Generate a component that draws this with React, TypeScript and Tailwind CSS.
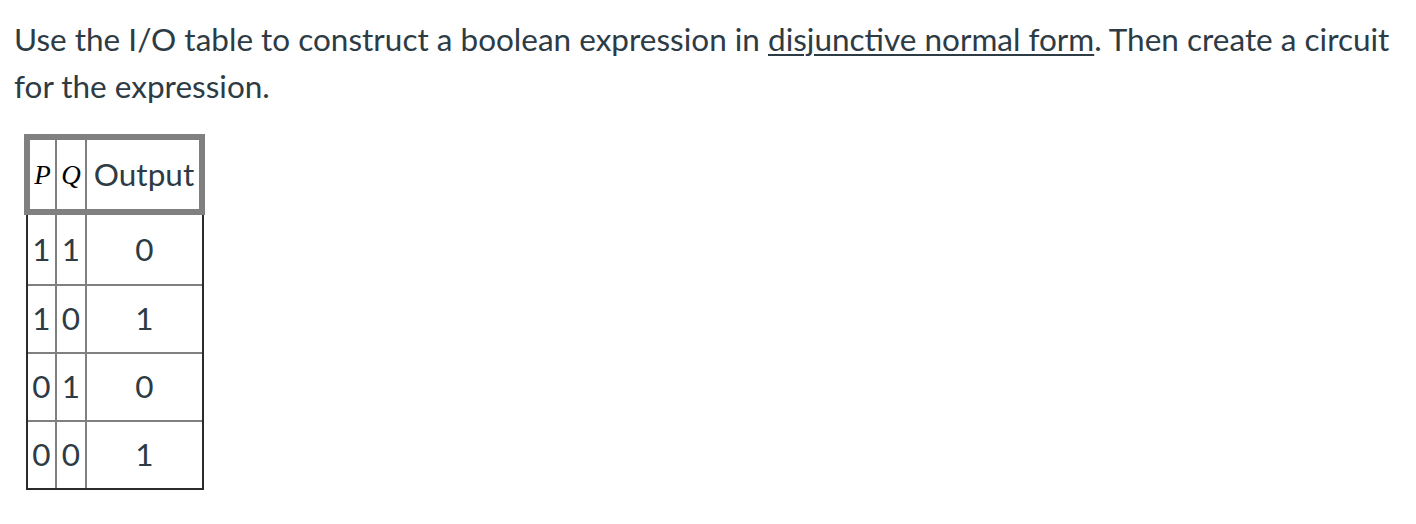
import React from "react";

const lato = { fontFamily: "Lato, 'Open Sans', sans-serif" };
const serif = { fontFamily: "'Liberation Serif', 'DejaVu Serif', serif" };

function Row({ a, b, out, h, last }: { a: string; b: string; out: string; h: string; last?: boolean }) {
  return (
    <div className={`flex ${h} ${last ? "" : "border-b-2 border-[#808080]"}`}>
      <div className="w-[29px] flex items-center justify-center border-r-2 border-[#808080]">{a}</div>
      <div className="w-[30px] flex items-center justify-center border-r-2 border-[#808080]">{b}</div>
      <div className="flex-1 flex items-center justify-center">{out}</div>
    </div>
  );
}

export default function App() {
  return (
    <div className="bg-white w-[1416px] h-[524px] text-[#2d3b45] text-[31.5px]" style={lato}>
      <p className="pl-[14px] pt-[16px] leading-[47px]">
        Use the I/O table to construct a boolean expression in{" "}
        <span className="underline decoration-2 underline-offset-[3px]">disjunctive normal form</span>. Then create a circuit
        <br />
        for the expression.
      </p>
      <div className="ml-[24px] mt-[24px] w-[181px]">
        <div className="flex h-[81px] border-[6px] border-[#808080]">
          <div className="w-[27px] flex items-center justify-center border-r-2 border-[#808080] text-[27px] leading-none italic text-black pt-[2px]" style={serif}>P</div>
          <div className="w-[30px] flex items-center justify-center border-r-2 border-[#808080] text-[27px] leading-none italic text-black pt-[2px]" style={serif}>Q</div>
          <div className="flex-1 flex items-center justify-center pl-[2px]">Output</div>
        </div>
        <div className="ml-[2px] w-[178px] border-x-2 border-b-2 border-[#2b2b2b]">
          <Row a="1" b="1" out="0" h="h-[71px]" />
          <Row a="1" b="0" out="1" h="h-[68px]" />
          <Row a="0" b="1" out="0" h="h-[68px]" />
          <Row a="0" b="0" out="1" h="h-[66px]" last />
        </div>
      </div>
    </div>
  );
}
